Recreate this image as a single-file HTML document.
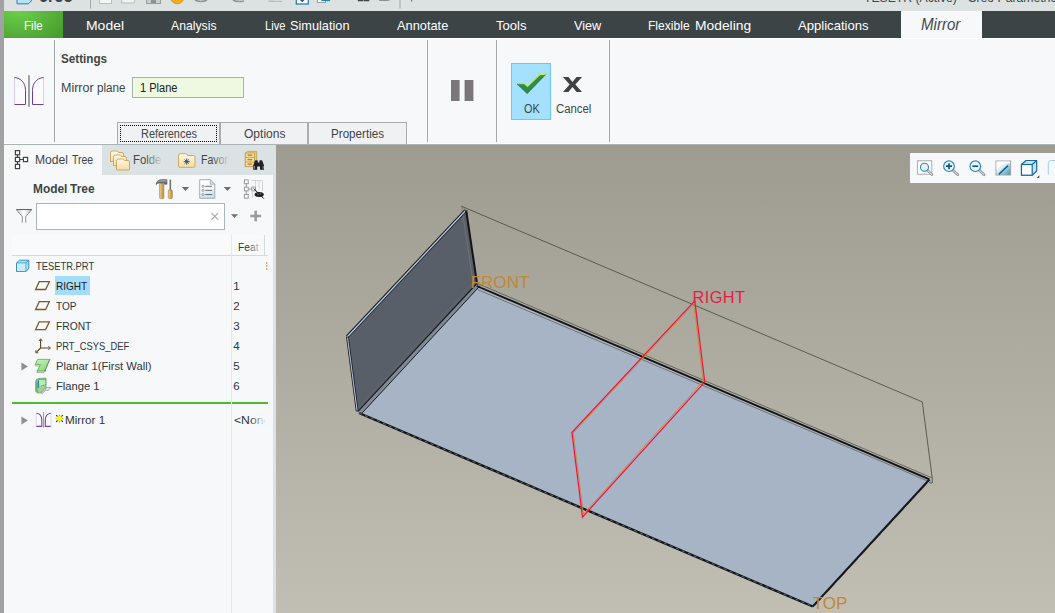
<!DOCTYPE html>
<html><head><meta charset="utf-8"><title>Creo Parametric - Mirror</title>
<style>
html,body{margin:0;padding:0;}
body{width:1055px;height:613px;overflow:hidden;position:relative;background:#f6f8fa;font-family:"Liberation Sans",sans-serif;}
.a{position:absolute;}
.t{position:absolute;white-space:nowrap;transform-origin:0 50%;}
#strip{left:0;top:0;width:4px;height:613px;background:#a2a2a2;}
#topbar{left:4px;top:0;width:1051px;height:11px;background:#dce2e2;}
#tabbar{left:4px;top:11px;width:1051px;height:27px;background:#3c4446;}
#filetab{left:4px;top:11px;width:59px;height:27px;background:radial-gradient(ellipse 90% 130% at 25% 0%,#6bd047 0%,#5bb63e 50%,#47a02d 100%);}
#mirtab{left:901px;top:11px;width:81px;height:27px;background:#f6f8fa;}
#ribbon{left:4px;top:38px;width:1051px;height:105px;background:#f6f8fa;}
#ribline{left:4px;top:143px;width:1051px;height:1px;background:#ffffff;border-bottom:1px solid #a9b3b7;}
#ribtop{left:4px;top:38px;width:1051px;height:1px;background:#fff;}
.vsep{position:absolute;width:1px;background:#a3a9ab;top:40px;height:102px;}
#inp{left:132px;top:77px;width:110px;height:19px;border:1px solid #a8adad;background:#edf9e0;}
.stab{position:absolute;top:122px;height:22px;border:1px solid #a9adaf;border-bottom:none;background:#f0f1f3;box-sizing:border-box;}
#okbtn{left:511px;top:63px;width:38px;height:55px;border:1px solid #6cc6f7;background:#a4e1ff;box-sizing:content-box;}
#ptabs{left:4px;top:145px;width:272px;height:30px;background:#dbe2e3;}
#ptab1{left:4px;top:145px;width:98px;height:30px;background:#f6f8fa;}
#panel{left:4px;top:175px;width:269px;height:438px;background:#f6f8fa;}
#pborder{left:273px;top:175px;width:3px;height:438px;background:#dbe2e5;}
#search{left:36px;top:203px;width:187px;height:25px;border:1px solid #a9b5b8;background:#fff;}
#hl{left:55px;top:276px;width:35px;height:19px;background:#a4dcfb;}
#greenline{left:12px;top:402px;width:256px;height:2px;background:#4fba2f;}
#view{left:276px;top:145px;width:779px;height:468px;background:linear-gradient(#9e9c90 0%,#c1bfb3 100%);}
#vtool{left:910px;top:153px;width:145px;height:30px;background:#f6f8fa;}
</style></head>
<body>
<div class="a" id="topbar"></div>
<div class="a" id="tabbar"></div>
<div class="a" id="filetab"></div>
<div class="a" id="mirtab"></div>
<div class="a" id="ribbon"></div>
<div class="a" id="ribline"></div>
<div class="a" id="ribtop"></div>
<div class="vsep" style="left:54px"></div>
<div class="vsep" style="left:427px"></div>
<div class="vsep" style="left:496px"></div>
<div class="vsep" style="left:609px"></div>
<div class="a" id="inp"></div>
<div class="stab" style="left:117px;width:103px;"></div>
<div class="stab" style="left:220px;width:88px;"></div>
<div class="stab" style="left:308px;width:99px;"></div>
<div class="a" style="left:120px;top:125px;width:95px;height:15px;border:1px dotted #000;"></div>
<div class="a" id="okbtn"></div>
<div class="a" id="ptabs"></div>
<div class="a" id="ptab1"></div>
<div class="a" id="panel"></div>
<div class="a" id="pborder"></div>
<div class="a" id="search"></div>
<div class="a" id="hl"></div>
<div class="a" id="greenline"></div>
<div class="a" id="view"></div>
<div class="a" id="vtool"></div>
<svg class="a" style="left:0;top:0" width="1055" height="613" viewBox="0 0 1055 613">
<defs>
<linearGradient id="gFold" x1="0" y1="0" x2="0" y2="1"><stop offset="0" stop-color="#fffaea"/><stop offset="1" stop-color="#f6dc9e"/></linearGradient>
<linearGradient id="gHam" x1="0" y1="0" x2="1" y2="0"><stop offset="0" stop-color="#f0d090"/><stop offset="1" stop-color="#b98a3a"/></linearGradient>
<linearGradient id="gTeal" x1="0" y1="0" x2="1" y2="1"><stop offset="0" stop-color="#ffffff"/><stop offset="0.45" stop-color="#d9eef5"/><stop offset="1" stop-color="#2f8fb0"/></linearGradient>
<linearGradient id="gBend" x1="0" y1="0" x2="1" y2="1"><stop offset="0" stop-color="#585f68"/><stop offset="1" stop-color="#a6b4c6"/></linearGradient>
<linearGradient id="gFade" x1="0" y1="0" x2="1" y2="0"><stop offset="0" stop-color="#dbe2e3" stop-opacity="0"/><stop offset="1" stop-color="#dbe2e3" stop-opacity="1"/></linearGradient>
<linearGradient id="gSteel" x1="0" y1="0" x2="0" y2="1"><stop offset="0" stop-color="#a9acb2"/><stop offset="1" stop-color="#54575c"/></linearGradient>
<linearGradient id="gDoc" x1="0" y1="0" x2="0.3" y2="1"><stop offset="0" stop-color="#ffffff"/><stop offset="0.55" stop-color="#f6fafc"/><stop offset="1" stop-color="#c9dfea"/></linearGradient>
<linearGradient id="gGreen" x1="0" y1="0" x2="0.4" y2="1"><stop offset="0" stop-color="#c3f4b0"/><stop offset="1" stop-color="#8fdc88"/></linearGradient>
<linearGradient id="gFun" gradientUnits="userSpaceOnUse" x1="16" y1="0" x2="32" y2="0"><stop offset="0" stop-color="#c5c8c9"/><stop offset="0.3" stop-color="#e6e8e8"/><stop offset="0.5" stop-color="#ffffff"/><stop offset="0.7" stop-color="#e6e8e8"/><stop offset="1" stop-color="#9fa4a6"/></linearGradient>
</defs>

<!-- ===== top bar slivers ===== -->
<g id="qat">
<path d="M17 -2 H31.3 V1 L28.5 3.8 H17 Z" fill="#b4e3f8" stroke="#2b7fb3" stroke-width="1"/>
<rect x="90" y="0" width="1" height="8.5" fill="#a2a8aa"/>
<rect x="99.5" y="-2" width="12" height="5.5" fill="#f4f6f6" stroke="#b9bdbd" stroke-width="1"/>
<path d="M122 -2 L121.5 3 H133.5 L136.5 -2 Z" fill="#f0f2f2" stroke="#b5b9b9" stroke-width="1"/>
<rect x="146.5" y="-2" width="14" height="5.5" fill="#c9cccc" stroke="#9a9e9e" stroke-width="1"/>
<rect x="151" y="0" width="5" height="3" fill="#8e9292"/>
<circle cx="177.2" cy="-3" r="6.8" fill="#f6ab1d" stroke="#d48c10" stroke-width="0.8"/>
<path d="M195 0 Q201 3 207 0" fill="none" stroke="#8d9294" stroke-width="1.6"/>
<path d="M233 0 Q237 2.5 244 1" fill="none" stroke="#8d9294" stroke-width="1.6"/>
<rect x="269" y="0.8" width="13" height="1.2" fill="#b7bcbc"/><rect x="269" y="-1" width="3" height="2.2" fill="none" stroke="#b7bcbc" stroke-width="0.8"/>
<rect x="296.3" y="-3" width="12" height="7" fill="#fff" stroke="#2b7fb3" stroke-width="1.3"/>
<path d="M300 0 h4.6 l-2.3 2.2 z" fill="#1c5f8c"/>
<rect x="317.5" y="-3" width="8" height="5.5" fill="#fff" stroke="#9aa0a2" stroke-width="1"/>
<rect x="322" y="-3" width="7.5" height="3.5" fill="#fff" stroke="#2b7fb3" stroke-width="1.2"/>
<path d="M358.5 -1 v1.6 h4.2 v-1.6 M364.5 -1 v1.6 h4.2 v-1.6" fill="none" stroke="#3d4547" stroke-width="1.3"/>
<path d="M379 0.3 h7 l3.5 -0.3" fill="none" stroke="#8d9294" stroke-width="1.5"/>
<rect x="399.5" y="0" width="1" height="8.5" fill="#a2a8aa"/>
<rect x="411" y="0" width="1.2" height="1.5" fill="#6d7375"/>
</g>

<!-- ===== ribbon icons ===== -->
<g id="mirrorBig" fill="none" stroke="#6b3fa0" stroke-width="1">
<path d="M14.5 77.5 V104.5" stroke="#b5a2d4"/>
<path d="M14.5 77.5 C21.5 78.2 25.5 83.5 25.5 90.5 V104.5 H14.5" fill="#fbfafd"/>
<path d="M43.5 77.5 V104.5" stroke="#b5a2d4"/>
<path d="M43.5 77.5 C36.5 78.2 32.5 83.5 32.5 90.5 V104.5 H43.5" fill="#fbfafd"/>
<rect x="28" y="75.2" width="2" height="31.6" fill="#a2a2a2" stroke="none"/>
</g>
<rect x="451" y="80" width="8.6" height="21" fill="#7b7779"/>
<rect x="464.6" y="80" width="8.8" height="21" fill="#7b7779"/>
<!-- check -->
<path d="M517.2 84 L524.5 83.6 L527.5 86.6 L540 74.7 L545.6 74.6 L527.2 93.6 Z" fill="#2f8a4e" stroke="#1d5a30" stroke-width="0.7" stroke-linejoin="round"/>
<path d="M517.6 83.8 L524.5 83.5 L527.5 86.5 L540 74.6 L545.4 74.5" fill="none" stroke="#c8ee1e" stroke-width="1.1"/>
<!-- X -->
<path d="M563 77 H568.4 L572.5 81.9 L576.6 77 H582 L575.4 84.5 L582 92 H576.6 L572.5 87.1 L568.4 92 H563 L569.6 84.5 Z" fill="#3f4243"/>

<!-- ===== panel tab icons ===== -->
<g id="treeIcon" fill="#fdfdfd" stroke="#3d4547" stroke-width="1.2">
<path d="M17.5 154 V165 M20 159.5 H24" fill="none"/>
<rect x="15.4" y="150.6" width="4.2" height="4.2"/>
<rect x="15.4" y="157.4" width="4.2" height="4.2"/>
<rect x="15.4" y="164.4" width="4.2" height="4.2"/>
<rect x="23.4" y="157.4" width="4.2" height="4.2"/>
</g>
<g id="folders" stroke="#c9a25a" stroke-width="0.9" fill="url(#gFold)">
<path d="M110.5 153 q0 -2 2 -2 h4 q1.5 0 2 1.5 h3.5 q1.5 0 1.5 1.5 v7.5 h-13 z"/>
<path d="M113.5 157 q0 -2 2 -2 h4 q1.5 0 2 1.5 h3.5 q1.5 0 1.5 1.5 v7.5 h-13 z"/>
<path d="M116.5 161 q0 -2 2 -2 h4 q1.5 0 2 1.5 h3.5 q1.5 0 1.5 1.5 v7 q0 1 -1 1 h-11 q-1 0 -1 -1 z"/>
</g>
<g id="favfolder">
<path d="M178.5 156 q0 -2.3 2 -2.3 h5 q1.5 0 2 1.8 h6 q1.5 0 1.5 1.5 v9 q0 1.3 -1.3 1.3 h-14 q-1.2 0 -1.2 -1.3 z" fill="url(#gFold)" stroke="#c9a25a" stroke-width="0.9"/>
<path d="M186.7 158.6 v6 M183.7 161.6 h6 M184.6 159.5 l4.2 4.2 M188.8 159.5 l-4.2 4.2" stroke="#14608e" stroke-width="1" fill="none"/>
</g>
<g id="cabinet">
<path d="M245.3 153 l2.2 -1.6 h9.2 v13.6 l-2.2 1.6 h-9.2 z" fill="#e9c77c" stroke="#c49c4c" stroke-width="0.8" stroke-linejoin="round"/>
<rect x="245.3" y="153" width="9.2" height="13.6" fill="#f6dc9c" stroke="#c49c4c" stroke-width="0.8"/>
<path d="M245.5 157.5 h9 M245.5 162 h9" stroke="#c09646" stroke-width="0.8"/>
<rect x="247.6" y="154.5" width="4.6" height="1.3" fill="#a9843c"/><rect x="247.6" y="159" width="4.6" height="1.3" fill="#a9843c"/><rect x="247.6" y="163.5" width="4.6" height="1.3" fill="#a9843c"/>
<path d="M253.2 169.8 v-4.2 l1.6 -4.6 q0.2 -0.8 1 -0.8 h1.2 q0.8 0 0.8 0.8 v1.6 h1.6 v-1.6 q0 -0.8 0.8 -0.8 h1.2 q0.8 0 1 0.8 l1.6 4.6 v4.2 h-4 v-3.4 h-2.8 v3.4 z" fill="#1f2224"/>
<path d="M254.4 166 v2.8 M263.2 166 v2.8" stroke="#a7adb1" stroke-width="0.9"/>
</g>

<!-- ===== tree toolbar ===== -->
<g id="hammer">
<rect x="159.6" y="183" width="4.2" height="15.6" rx="0.9" fill="url(#gHam)" stroke="#a47c34" stroke-width="0.6"/>
<path d="M156 184.6 q0.3 -3.6 3.6 -4.8 q3 -0.8 7.4 -0.2 v4.6 h-2.6 v-1.2 h-5 q-2 0 -3.4 1.6 z" fill="url(#gSteel)" stroke="#4a4d52" stroke-width="0.5"/>
<rect x="169.6" y="179.6" width="1.5" height="10.8" fill="#6a6d72"/>
<rect x="168.3" y="189.8" width="4" height="8.8" rx="1.2" fill="url(#gHam)" stroke="#a47c34" stroke-width="0.6"/>
</g>
<path d="M181.8 187 h7.4 l-3.7 3.9 z" fill="#6a6f72"/>
<g id="doclist">
<path d="M199.7 179.7 h10.5 l4.6 4.6 v14 h-15.1 z" fill="url(#gDoc)" stroke="#9aa6ab" stroke-width="0.9"/>
<path d="M210.2 179.7 v4.6 h4.6 z" fill="#cfe2ec" stroke="#9aa6ab" stroke-width="0.7"/>
<path d="M205.3 186.3 h6.8 M205.3 190.4 h6.8 M205.3 194.5 h6.8" stroke="#5b6164" stroke-width="0.9"/>
<circle cx="203" cy="186.3" r="1" fill="#fff" stroke="#5b6164" stroke-width="0.6"/><circle cx="203" cy="190.4" r="1" fill="#fff" stroke="#5b6164" stroke-width="0.6"/><circle cx="203" cy="194.5" r="1" fill="#fff" stroke="#5b6164" stroke-width="0.6"/>
</g>
<path d="M223.7 187 h7.4 l-3.7 3.9 z" fill="#6a6f72"/>
<g id="treeeye" fill="none">
<path d="M246.3 183.5 V195 M248.5 189 H252" stroke="#8b9093" stroke-width="0.9"/>
<rect x="244.4" y="179.9" width="3.8" height="3.8" stroke="#8b9093" stroke-width="0.9" fill="#fff"/>
<rect x="244.4" y="187.1" width="3.8" height="3.8" stroke="#8b9093" stroke-width="0.9" fill="#fff"/>
<rect x="244.4" y="194.4" width="3.8" height="3.8" stroke="#8b9093" stroke-width="0.9" fill="#fff"/>
<rect x="251.8" y="187.1" width="3.6" height="3.8" stroke="#8b9093" stroke-width="0.9" fill="#fff"/>
<path d="M251.5 180.5 h11 v10.5 M255.5 181 v6 M259 181 v8.5 M252.5 192 v6" stroke="#cdd2d4" stroke-width="0.9"/>
<ellipse cx="259.2" cy="194.4" rx="4.6" ry="2.5" fill="#1f2123"/>
<ellipse cx="259.2" cy="194" rx="2.3" ry="1" fill="#5d6063"/>
<path d="M253.8 188.6 L263.8 198.6" stroke="#111" stroke-width="1"/>
</g>
<!-- search row -->
<path d="M16.2 209.6 h15.6 l-5.9 6.9 v6.2 h-3.8 v-6.2 z" fill="url(#gFun)" stroke="none"/>
<path d="M16.4 209.8 l5.9 6.8 v6 M31.6 209.8 l-5.9 6.8 v6" fill="none" stroke="#7f8487" stroke-width="0.9"/>
<path d="M16.2 209.5 h15.6" stroke="#4d5356" stroke-width="0.9"/>
<path d="M211.5 213.2 l6.6 6.4 M218.1 213.2 l-6.6 6.4" stroke="#9ea6a9" stroke-width="1.1" fill="none"/>
<path d="M231 214.3 h7 l-3.5 3.8 z" fill="#6a6f72"/>
<path d="M250.3 216 h10.8 M255.7 210.7 v10.6" stroke="#979b9e" stroke-width="2.5" fill="none"/>
<!-- header -->
<rect x="12" y="235" width="256" height="20" fill="#f9fafb"/>
<rect x="12" y="255" width="256" height="1" fill="#d3dadc"/>
<rect x="231" y="235" width="1" height="378" fill="#e4e9eb"/>
<rect x="264" y="235" width="1" height="20" fill="#d3dadc"/>
<circle cx="266.8" cy="263" r="0.7" fill="#a36a2a"/><circle cx="266.8" cy="266" r="0.7" fill="#a36a2a"/><circle cx="266.8" cy="269" r="0.7" fill="#a36a2a"/>

<!-- tree icons -->
<g id="partcube">
<path d="M16.5 263 l3 -2.8 h9.3 v8.4 l-3 2.9 h-9.3 z" fill="#a9e2f7" stroke="#2a84b8" stroke-width="0.9" stroke-linejoin="round"/>
<path d="M16.5 263 h9.3 l3 -2.8 M25.8 263 v8.5" fill="none" stroke="#2a84b8" stroke-width="0.8"/>
<rect x="17" y="263.5" width="8.4" height="7.6" fill="#c6eefb"/>
</g>
<g fill="none" stroke="#7a5b28" stroke-width="1.3" stroke-linejoin="miter">
<path d="M39.2 281.7 H49.3 L45.6 289.5 H35.6 Z"/>
<path d="M39.2 301.7 H49.3 L45.6 309.5 H35.6 Z"/>
<path d="M39.2 321.8 H49.3 L45.6 329.6 H35.6 Z"/>
</g>
<g id="csys" fill="none" stroke="#5a4420" stroke-width="1.1">
<path d="M40.6 339.5 V348 H49.6 M40.6 348 L36.3 352.3"/>
<path d="M38.9 341.2 l1.7 -2.4 l1.7 2.4 M48.3 346.4 l2.3 1.6 l-2.3 1.6 M35.8 350.3 v2.5 h2.5" stroke-width="0.9"/>
</g>
<path d="M21.4 362.4 l6.6 4 l-6.6 4.1 z" fill="#8d9194"/>
<path d="M21.4 416.4 l6.6 4 l-6.6 4.1 z" fill="#8d9194"/>
<g id="planar">
<path d="M35.3 364.6 v1.5 h4.6 l0.8 -1.5 z" fill="#e9eceb" stroke="#8b918f" stroke-width="0.5"/>
<path d="M37 371 v1.6 h7 l1.4 -2.2 z" fill="#eef0ef" stroke="#7d8381" stroke-width="0.6"/>
<path d="M37.6 359.4 H49.8 L44.8 371 H37 L40.6 364.6 H35.3 Z" fill="url(#gGreen)" stroke="#5fab58" stroke-width="0.8" stroke-linejoin="round"/>
<path d="M49.8 359.4 L44.8 371 l0.7 0.6" fill="none" stroke="#6d7a6c" stroke-width="0.8"/>
</g>
<g id="flange">
<path d="M40.6 393.2 l5.2 -4.2 l0 -1.6 h5.2 l-2.6 3 h-3 l-2.4 2.8 z" fill="#e3e5e5" stroke="#8d9392" stroke-width="0.7"/>
<path d="M35.6 382 q0 -3.4 3.4 -3.6 l7 -0.4 v9.6 l-5.6 5 q-1.6 0.8 -3.2 0.2 q-1.6 -0.6 -1.6 -2.4 z" fill="#9fd39a" stroke="#5f9e5a" stroke-width="0.7"/>
<path d="M38.4 379.6 h7.4 v5 l-6 1.6 z" fill="#b9ecae"/>
<path d="M36.8 381.5 v9 q0 1.6 1.6 1.8" fill="none" stroke="#4f8f4c" stroke-width="0.8"/>
<path d="M38.6 379.5 h7.2 v5.2 l-5.4 1.6" fill="none" stroke="#1c6f9e" stroke-width="0.9" stroke-dasharray="1 1"/>
<path d="M38.3 380.2 V388" stroke="#1481c4" stroke-width="1.2"/>
</g>
<g id="mirrorSmall" fill="none" stroke="#7445a4" stroke-width="1.1">
<path d="M36.4 413 V426.4" stroke="#c6b8df"/>
<path d="M36.4 413.2 C40 413.6 41.8 416.2 41.8 420 V426.4 H36.4" fill="#fbfafd"/>
<path d="M50.7 413 V426.4" stroke="#c6b8df"/>
<path d="M50.7 413.2 C47.1 413.6 45.3 416.2 45.3 420 V426.4 H50.7" fill="#fbfafd"/>
<path d="M43.5 412 V427.6" stroke="#9c9c9c" stroke-width="1"/>
</g>
<g id="star">
<path d="M56.2 415.2 l6.6 6.6 M62.8 415.2 l-6.6 6.6" stroke="#1e2a3a" stroke-width="1.1" fill="none"/>
<path d="M59.5 414.8 v7.4 M55.8 418.5 h7.4" stroke="#6d6d20" stroke-width="1.1" fill="none"/>
<path d="M59.5 415.4 v6.2 M56.4 418.5 h6.2" stroke="#ffff00" stroke-width="1.1" fill="none"/>
<rect x="57.3" y="416.3" width="4.4" height="4.4" fill="#ffff00"/>
</g>

<!-- ===== 3D viewport ===== -->
<g id="model">
<!-- thin preview outline -->
<path d="M461.4 206.2 L922.3 401.9 L932.3 478.4 v4.5 h-2.5 v-3" fill="none" stroke="#505248" stroke-width="0.9"/>
<path d="M466 210.5 L461.4 206.2" fill="none" stroke="#6a6b60" stroke-width="0.8"/>
<!-- plate -->
<path d="M477 285 L929.5 479 L812.8 606.5 L358 412.5 Z" fill="#a6b4c6"/>
<!-- bend strip -->
<path d="M357.4 411.8 L475.5 283.5 L480 286.2 L361.6 414 Z" fill="url(#gBend)"/>
<!-- flange -->
<path d="M347.6 336.4 L466 210.5 L477 284.5 L357.4 411.8 Z" fill="#585f68"/>
<!-- inner thin preview line in flange -->
<path d="M461.6 206.6 L473.2 283.5" stroke="#7d7c74" stroke-width="0.7" fill="none"/>
<path d="M472 284 L359.5 407" stroke="#6f6d64" stroke-width="0.6" fill="none"/>
<!-- flange top edge: black / light / black -->
<path d="M347.2 336.6 L465.4 210.6" stroke="#191b1f" stroke-width="3.2" fill="none"/>
<path d="M347.4 336.7 L465.2 211" stroke="#b9cae2" stroke-width="1.3" fill="none"/>
<!-- left edge -->
<path d="M347.4 336.6 L357.2 411.4" stroke="#1d2024" stroke-width="2.8" fill="none"/>
<path d="M347.5 337.5 L357.1 410.6" stroke="#aebdd2" stroke-width="1.1" fill="none"/>
<!-- flange right edge dark -->
<path d="M466.2 210.5 L477.2 284.6" stroke="#121417" stroke-width="2" fill="none"/>
<!-- bend lines -->
<path d="M358.3 411.2 L476.6 283.6" stroke="#16181b" stroke-width="1.1" fill="none"/>
<path d="M361.6 413.6 L479.6 286.2" stroke="#1d2024" stroke-width="1" fill="none"/>
<!-- plate top edge (black) -->
<path d="M476.8 286 L929.4 479.3" stroke="#0f1114" stroke-width="1.9" fill="none"/>
<path d="M475.8 282.7 L932 477.9" stroke="#5d5e55" stroke-width="0.9" fill="none"/>
<path d="M477.7 289.6 L928.2 481.3" stroke="#746a5e" stroke-width="0.9" fill="none"/>
<!-- plate bottom edge -->
<path d="M359 413 L812.8 606.5" stroke="#121417" stroke-width="2.4" fill="none"/>
<path d="M359 413 L812.8 606.5" stroke="#7c8898" stroke-width="0.7" stroke-dasharray="3 3.5" fill="none"/>
<!-- plate right edge -->
<path d="M929.5 479.5 L812.8 606.5" stroke="#16181c" stroke-width="2.2" fill="none"/>
<path d="M930.6 480.3 L814 607" stroke="#9aa7b8" stroke-width="0.9" stroke-dasharray="5 12" fill="none"/>
<!-- red datum plane -->
<path d="M693.8 303.8 L703.2 381.2 L583.4 514.1 L573.3 432.9 Z" fill="none" stroke="#c48a3e" stroke-width="0.9"/>
<path d="M694.8 300.9 L704.5 380 Q704.8 382 703.3 383.6 L582.5 517.1 L571.9 432.5 Z" fill="none" stroke="#f5123a" stroke-width="1.25"/>
</g>
<text x="470.5" y="288" font-family="Liberation Sans, sans-serif" font-size="16.4" fill="#c28637" textLength="59" lengthAdjust="spacingAndGlyphs">FRONT</text>
<text x="692.6" y="302.9" font-family="Liberation Sans, sans-serif" font-size="16.4" fill="#ee1a40" textLength="52.4" lengthAdjust="spacing">RIGHT</text>
<text x="812.8" y="609" font-family="Liberation Sans, sans-serif" font-size="16.4" fill="#c28637" textLength="34.6" lengthAdjust="spacingAndGlyphs">TOP</text>

<!-- viewport toolbar icons -->
<g id="vicons">
<rect x="917.4" y="160.8" width="14.4" height="13.4" fill="#fdfdfd" stroke="#a3a6a8" stroke-width="0.9"/>
<path d="M927.6 170.4 L932 174.6" stroke="#8f9295" stroke-width="2.6" stroke-linecap="round"/>
<path d="M927.8 170.6 L931.8 174.4" stroke="#d5d7d8" stroke-width="1.1" stroke-linecap="round"/>
<circle cx="924.5" cy="167.3" r="4" fill="#e4f3fa" stroke="#2a8ab8" stroke-width="1.1"/>
<path d="M953 170.2 L957.8 174.8" stroke="#8f9295" stroke-width="2.6" stroke-linecap="round"/>
<path d="M953.2 170.4 L957.6 174.6" stroke="#d5d7d8" stroke-width="1.1" stroke-linecap="round"/>
<circle cx="949" cy="166.2" r="5.3" fill="#eef8fc" stroke="#2a8ab8" stroke-width="1.2"/>
<path d="M946 166.2 h6 M949 163.2 v6" stroke="#0d5a8a" stroke-width="1.7"/>
<path d="M979.3 170.2 L984.1 174.8" stroke="#8f9295" stroke-width="2.6" stroke-linecap="round"/>
<path d="M979.5 170.4 L983.9 174.6" stroke="#d5d7d8" stroke-width="1.1" stroke-linecap="round"/>
<circle cx="975.3" cy="166.2" r="5.3" fill="#eef8fc" stroke="#2a8ab8" stroke-width="1.2"/>
<path d="M972.3 166.2 h6" stroke="#0d5a8a" stroke-width="1.7"/>
<rect x="996" y="161" width="14.6" height="14" fill="url(#gTeal)" stroke="#a2a5a6" stroke-width="1"/>
<path d="M996.6 170 Q1001 162.5 1010 163.2 V161.6 H996.6 Z" fill="#fff"/>
<path d="M998.8 174.4 L1008 165.6" stroke="#14608e" stroke-width="1.5"/>
<path d="M1021.5 164.5 l4.5 -4 h10.7 v10.5 l-4.5 4.2 h-10.7 z" fill="#bfe6f5" stroke="#1c6a94" stroke-width="1.2" stroke-linejoin="round"/>
<rect x="1021.5" y="164.5" width="10.7" height="10.7" fill="#fdfeff" stroke="#1c6a94" stroke-width="1.2"/>
<path d="M1032.2 164.5 l4.5 -4" stroke="#1c6a94" stroke-width="1.1"/>
<path d="M1039.3 175.3 v2.6 h-2.6 z" fill="#4a4f52"/>
<path d="M1048.3 174.5 v-11 q0 -3 3 -3 h4" fill="#f4fbfe" stroke="#9fd0e8" stroke-width="1"/>
</g>
</svg>

<span class="t" id="t0" style="left:39.00px;top:-14.08px;font-size:19.00px;line-height:19.00px;color:#3d4547;font-weight:bold;transform:scaleX(0.8470);">creo</span>
<span class="t" id="t1" style="left:863.50px;top:-8.38px;font-size:12.50px;line-height:12.50px;color:#3d4547;transform:scaleX(0.9758);">TESETR (Active) - Creo Parametric</span>
<span class="t" id="t2" style="left:24.00px;top:18.74px;font-size:13.30px;line-height:13.30px;color:#ffffff;transform:scaleX(0.8746);">File</span>
<span class="t" id="t3" style="left:86.00px;top:18.74px;font-size:13.30px;line-height:13.30px;color:#ffffff;transform:scaleX(1.0492);">Model</span>
<span class="t" id="t4" style="left:171.00px;top:18.74px;font-size:13.30px;line-height:13.30px;color:#ffffff;transform:scaleX(0.9189);">Analysis</span>
<span class="t" id="t5" style="left:264.50px;top:18.74px;font-size:13.30px;line-height:13.30px;color:#ffffff;transform:scaleX(0.8359);">Live</span>
<span class="t" id="t6" style="left:290.00px;top:18.74px;font-size:13.30px;line-height:13.30px;color:#ffffff;transform:scaleX(0.9582);">Simulation</span>
<span class="t" id="t7" style="left:397.00px;top:18.74px;font-size:13.30px;line-height:13.30px;color:#ffffff;transform:scaleX(0.9627);">Annotate</span>
<span class="t" id="t8" style="left:496.25px;top:18.74px;font-size:13.30px;line-height:13.30px;color:#ffffff;transform:scaleX(0.9824);">Tools</span>
<span class="t" id="t9" style="left:574.00px;top:18.74px;font-size:13.30px;line-height:13.30px;color:#ffffff;transform:scaleX(0.9530);">View</span>
<span class="t" id="t10" style="left:648.40px;top:18.74px;font-size:13.30px;line-height:13.30px;color:#ffffff;transform:scaleX(0.9077);">Flexible</span>
<span class="t" id="t11" style="left:694.90px;top:18.74px;font-size:13.30px;line-height:13.30px;color:#ffffff;transform:scaleX(1.0395);">Modeling</span>
<span class="t" id="t12" style="left:798.40px;top:18.74px;font-size:13.30px;line-height:13.30px;color:#ffffff;transform:scaleX(0.9846);">Applications</span>
<span class="t" id="t13" style="left:921.00px;top:17.43px;font-size:15.80px;line-height:15.80px;color:#444c4e;font-style:italic;transform:scaleX(0.9552);">Mirror</span>
<span class="t" id="t14" style="left:61.00px;top:52.62px;font-size:12.50px;line-height:12.50px;color:#3d4547;font-weight:bold;transform:scaleX(0.9328);">Settings</span>
<span class="t" id="t15" style="left:61.40px;top:81.84px;font-size:12.00px;line-height:12.00px;color:#3d4547;transform:scaleX(1.0406);">Mirror</span>
<span class="t" id="t16" style="left:97.40px;top:81.84px;font-size:12.00px;line-height:12.00px;color:#3d4547;transform:scaleX(0.9668);">plane</span>
<span class="t" id="t17" style="left:139.50px;top:81.84px;font-size:12.00px;line-height:12.00px;color:#222;transform:scaleX(0.9213);">1 Plane</span>
<span class="t" id="t18" style="left:140.50px;top:127.84px;font-size:12.00px;line-height:12.00px;color:#3d4547;transform:scaleX(0.9124);">References</span>
<span class="t" id="t19" style="left:243.50px;top:127.84px;font-size:12.00px;line-height:12.00px;color:#3d4547;transform:scaleX(1.0034);">Options</span>
<span class="t" id="t20" style="left:331.00px;top:127.84px;font-size:12.00px;line-height:12.00px;color:#3d4547;transform:scaleX(0.9689);">Properties</span>
<span class="t" id="t21" style="left:523.60px;top:103.04px;font-size:12.00px;line-height:12.00px;color:#3d4547;transform:scaleX(0.9052);">OK</span>
<span class="t" id="t22" style="left:555.60px;top:103.04px;font-size:12.00px;line-height:12.00px;color:#3d4547;transform:scaleX(0.9476);">Cancel</span>
<span class="t" id="t23" style="left:35.20px;top:154.34px;font-size:12.00px;line-height:12.00px;color:#3d4547;transform:scaleX(1.0096);">Model</span>
<span class="t" id="t24" style="left:72.10px;top:154.34px;font-size:12.00px;line-height:12.00px;color:#3d4547;transform:scaleX(0.8707);">Tree</span>
<span class="t" id="t25" style="left:32.80px;top:183.24px;font-size:12.00px;line-height:12.00px;color:#3d4547;font-weight:bold;transform:scaleX(0.9922);">Model</span>
<span class="t" id="t26" style="left:70.30px;top:183.24px;font-size:12.00px;line-height:12.00px;color:#3d4547;font-weight:bold;transform:scaleX(0.9965);">Tree</span>
<span class="t" id="t27" style="left:35.80px;top:261.07px;font-size:11.50px;line-height:11.50px;color:#2f3638;transform:scaleX(0.8156);">TESETR.PRT</span>
<span class="t" id="t28" style="left:55.60px;top:281.07px;font-size:11.50px;line-height:11.50px;color:#1a1a1a;transform:scaleX(0.8720);">RIGHT</span>
<span class="t" id="t29" style="left:55.60px;top:300.97px;font-size:11.50px;line-height:11.50px;color:#2f3638;transform:scaleX(0.8704);">TOP</span>
<span class="t" id="t30" style="left:55.60px;top:320.97px;font-size:11.50px;line-height:11.50px;color:#2f3638;transform:scaleX(0.8912);">FRONT</span>
<span class="t" id="t31" style="left:55.60px;top:340.97px;font-size:11.50px;line-height:11.50px;color:#2f3638;transform:scaleX(0.8131);">PRT_CSYS_DEF</span>
<span class="t" id="t32" style="left:55.60px;top:360.97px;font-size:11.50px;line-height:11.50px;color:#2f3638;transform:scaleX(0.9736);">Planar 1(First Wall)</span>
<span class="t" id="t33" style="left:55.60px;top:380.97px;font-size:11.50px;line-height:11.50px;color:#2f3638;transform:scaleX(0.9740);">Flange 1</span>
<span class="t" id="t34" style="left:64.80px;top:415.17px;font-size:11.50px;line-height:11.50px;color:#2f3638;transform:scaleX(1.0145);">Mirror 1</span>
<span class="t" id="t35" style="left:133.30px;top:154.34px;font-size:12.00px;line-height:12.00px;color:#3d4547;transform:scaleX(0.9457);">Folde</span>
<span class="t" id="t36" style="left:201.30px;top:154.34px;font-size:12.00px;line-height:12.00px;color:#3d4547;transform:scaleX(0.8798);">Favor</span>
<span class="t" id="t37" style="left:238.30px;top:241.87px;font-size:11.50px;line-height:11.50px;color:#2f3638;transform:scaleX(0.8907);">Feat</span>
<span class="t" id="t38" style="left:234.00px;top:415.17px;font-size:11.50px;line-height:11.50px;color:#2f3638;transform:scaleX(1.0579);">&lt;None</span>
<span class="t" id="t39" style="left:233.20px;top:281.07px;font-size:11.50px;line-height:11.50px;color:#2f3638;">1</span>
<span class="t" id="t40" style="left:233.20px;top:300.97px;font-size:11.50px;line-height:11.50px;color:#2f3638;">2</span>
<span class="t" id="t41" style="left:233.20px;top:320.97px;font-size:11.50px;line-height:11.50px;color:#2f3638;">3</span>
<span class="t" id="t42" style="left:233.20px;top:340.97px;font-size:11.50px;line-height:11.50px;color:#2f3638;">4</span>
<span class="t" id="t43" style="left:233.20px;top:360.97px;font-size:11.50px;line-height:11.50px;color:#2f3638;">5</span>
<span class="t" id="t44" style="left:233.20px;top:380.97px;font-size:11.50px;line-height:11.50px;color:#2f3638;">6</span>
<div class="a" style="left:145px;top:146px;width:24px;height:28px;background:linear-gradient(90deg,rgba(219,226,227,0),rgba(219,226,227,1) 75%);"></div>
<div class="a" style="left:212px;top:146px;width:24px;height:28px;background:linear-gradient(90deg,rgba(219,226,227,0),rgba(219,226,227,1) 75%);"></div>
<div class="a" style="left:248px;top:238px;width:16px;height:16px;background:linear-gradient(90deg,rgba(245,248,250,0),rgba(245,248,250,1) 90%);"></div>
<div class="a" style="left:250px;top:412px;width:23px;height:16px;background:linear-gradient(90deg,rgba(245,248,250,0),rgba(245,248,250,1) 70%);"></div>
<div class="a" id="strip"></div>
</body></html>
